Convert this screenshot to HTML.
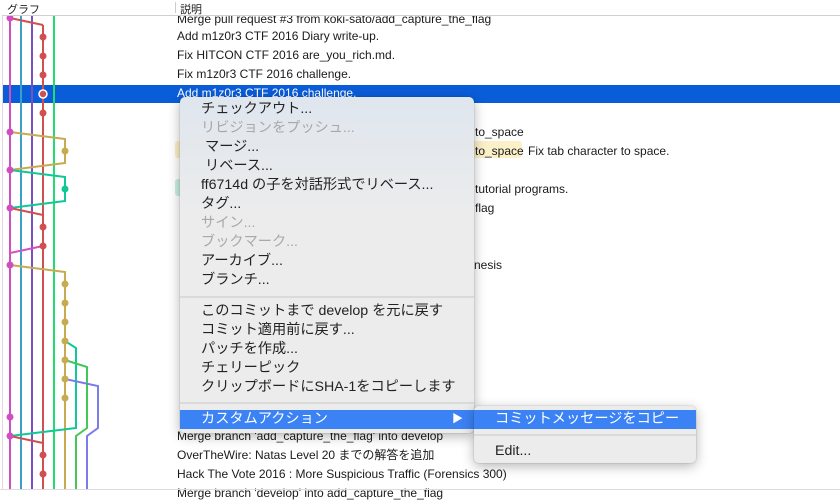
<!DOCTYPE html>
<html><head><meta charset="utf-8"><style>
*{margin:0;padding:0;box-sizing:border-box}
body{width:840px;height:490px;overflow:hidden;background:#fff;position:relative;font-family:"Liberation Sans","Noto Sans CJK JP",sans-serif;font-size:12px;color:#222}
.hdr{position:absolute;left:2px;top:0;width:838px;height:16px;border-bottom:1px solid #d0d0d0;background:#fff;font-size:11px;z-index:2}
.hdr span{position:absolute;top:1px}
.row{position:absolute;left:177px;height:19px;line-height:19px;white-space:nowrap;color:#1a1a1a}
.sel{position:absolute;left:2px;top:85px;width:838px;height:18px;background:#0a5dd9}
.frag{position:absolute;white-space:nowrap;height:19px;line-height:19px;color:#1a1a1a}
.menu{position:absolute;left:180px;top:97px;width:294px;height:336px;border-radius:5px;background:linear-gradient(#dfe6ee,#ececec 120px,#ececec);box-shadow:0 3px 12px rgba(0,0,0,.3),0 0 0 1px rgba(0,0,0,.06);z-index:3}
.mi{position:absolute;left:21px;height:19px;line-height:19px;font-size:14.2px;color:#222;white-space:nowrap}
.dis{color:#a8a8a8}
.sep{position:absolute;left:0;width:294px;height:2px;background:#dadada}
.hl{position:absolute;left:0;top:313px;width:294px;height:19px;background:#3b82f4}
.sub{position:absolute;left:474px;top:406px;width:222px;height:57px;border-radius:5px;background:#ececec;box-shadow:0 3px 12px rgba(0,0,0,.3),0 0 0 1px rgba(0,0,0,.06);z-index:4}
</style></head><body>
<div class="sel"></div>
<svg width="176" height="490" style="position:absolute;left:0;top:0" fill="none" stroke-width="2">
<line x1="2.5" y1="0" x2="2.5" y2="490" stroke="#e4d8dc" stroke-width="1"/>
<line x1="10" y1="16" x2="10" y2="490" stroke="#d04fc0"/>
<line x1="21" y1="16" x2="21" y2="490" stroke="#3aa0c8"/>
<line x1="32" y1="16" x2="32" y2="490" stroke="#7a4fc0"/>
<line x1="43" y1="25" x2="43" y2="490" stroke="#d05050"/>
<line x1="54" y1="16" x2="54" y2="490" stroke="#22dc70"/>
<polyline points="10,18 43,25" stroke="#d05050"/>
<polyline points="10,132 65,139 65,163 10,170" stroke="#c8aa50"/>
<polyline points="10,170 65,177 65,201 10,208" stroke="#10c896"/>
<polyline points="10,208 43,215" stroke="#d05050"/>
<polyline points="43,246 10,253" stroke="#d850c0"/>
<polyline points="10,265 65,272 65,490" stroke="#c8aa50"/>
<polyline points="65,341 76,348 76,428 10,436" stroke="#10c896"/>
<polyline points="65,360 87,367 87,428 76,436 76,490" stroke="#44c855"/>
<polyline points="65,379 98,386 98,428 87,436 87,490" stroke="#7b7bea"/>
<polyline points="10,436 43,443" stroke="#d05050"/>
<g stroke="none" fill="#d04fc0"><circle cx="10" cy="18" r="3.5"/><circle cx="10" cy="132" r="3.5"/><circle cx="10" cy="170" r="3.5"/><circle cx="10" cy="208" r="3.5"/><circle cx="10" cy="265" r="3.5"/><circle cx="10" cy="417" r="3.5"/><circle cx="10" cy="436" r="3.5"/></g>
<g stroke="none" fill="#d05050"><circle cx="43" cy="37" r="3.5"/><circle cx="43" cy="56" r="3.5"/><circle cx="43" cy="75" r="3.5"/><circle cx="43" cy="113" r="3.5"/><circle cx="43" cy="227" r="3.5"/><circle cx="43" cy="246" r="3.5"/><circle cx="43" cy="455" r="3.5"/><circle cx="43" cy="474" r="3.5"/></g>
<circle cx="43" cy="94" r="4" fill="#d05050" stroke="#fff" stroke-width="1.5"/>
<g stroke="none" fill="#c8aa50"><circle cx="65" cy="151" r="3.5"/><circle cx="65" cy="284" r="3.5"/><circle cx="65" cy="303" r="3.5"/><circle cx="65" cy="322" r="3.5"/><circle cx="65" cy="341" r="3.5"/><circle cx="65" cy="360" r="3.5"/><circle cx="65" cy="379" r="3.5"/><circle cx="65" cy="398" r="3.5"/></g>
<circle cx="65" cy="189" r="3.5" fill="#10c896" stroke="none"/>
</svg>
<div class="hdr"><span style="left:5px">グラフ</span><span style="left:173px;top:2px;width:1px;height:11px;background:#ccc"></span><span style="left:178px">説明</span></div>
<div class="row" style="top:10px">Merge pull request #3 from koki-sato/add_capture_the_flag</div>
<div class="row" style="top:27px">Add m1z0r3 CTF 2016 Diary write-up.</div>
<div class="row" style="top:46px">Fix HITCON CTF 2016 are_you_rich.md.</div>
<div class="row" style="top:65px">Fix m1z0r3 CTF 2016 challenge.</div>
<div class="row" style="top:84px;color:#fff">Add m1z0r3 CTF 2016 challenge.</div>
<div style="position:absolute;left:175px;top:141px;width:10px;height:17px;background:#fbf0c8;border-radius:3px"></div>
<div style="position:absolute;left:175px;top:179px;width:10px;height:17px;background:#c8f0e0;border-radius:3px"></div>
<div class="frag" style="left:475px;top:123px">to_space</div>
<div style="position:absolute;left:470px;top:141px;width:52px;height:17px;background:#fbf0c8;border-radius:3px"></div>
<div class="frag" style="left:475px;top:142px">to_space</div>
<div class="frag" style="left:528px;top:142px">Fix tab character to space.</div>
<div class="frag" style="left:475px;top:180px">tutorial programs.</div>
<div class="frag" style="left:475px;top:199px">flag</div>
<div class="frag" style="left:474px;top:256px">nesis</div>
<div class="row" style="top:427px">Merge branch 'add_capture_the_flag' into develop</div>
<div class="row" style="top:446px">OverTheWire: Natas Level 20 までの解答を追加</div>
<div class="row" style="top:465px">Hack The Vote 2016 : More Suspicious Traffic (Forensics 300)</div>
<div class="row" style="top:484px">Merge branch 'develop' into add_capture_the_flag</div>
<div style="position:absolute;left:0;top:489px;width:840px;height:1px;background:#ddd"></div>
<div class="menu">
<div class="mi" style="top:3px">チェックアウト...</div>
<div class="mi dis" style="top:22px">リビジョンをプッシュ...</div>
<div class="mi" style="top:41px;left:25px">マージ...</div>
<div class="mi" style="top:60px;left:25px">リベース...</div>
<div class="mi" style="top:79px">ff6714d の子を対話形式でリベース...</div>
<div class="mi" style="top:98px">タグ...</div>
<div class="mi dis" style="top:117px">サイン...</div>
<div class="mi dis" style="top:136px">ブックマーク...</div>
<div class="mi" style="top:155px">アーカイブ...</div>
<div class="mi" style="top:174px">ブランチ...</div>
<div class="sep" style="top:199px"></div>
<div class="mi" style="top:205px">このコミットまで develop を元に戻す</div>
<div class="mi" style="top:224px">コミット適用前に戻す...</div>
<div class="mi" style="top:243px">パッチを作成...</div>
<div class="mi" style="top:262px">チェリーピック</div>
<div class="mi" style="top:281px">クリップボードにSHA-1をコピーします</div>
<div class="sep" style="top:305px"></div>
<div class="hl"></div>
<div class="mi" style="top:313px;color:#fff">カスタムアクション</div>
<div class="mi" style="top:313px;left:272px;color:#fff;font-size:11px">▶</div>
</div>
<div class="sub">
<div style="position:absolute;left:0;top:4px;width:222px;height:19px;background:#3b82f4"></div>
<div class="mi" style="top:4px;color:#fff">コミットメッセージをコピー</div>
<div class="sep" style="top:28px;width:222px"></div>
<div class="mi" style="top:36px">Edit...</div>
</div>
</body></html>
